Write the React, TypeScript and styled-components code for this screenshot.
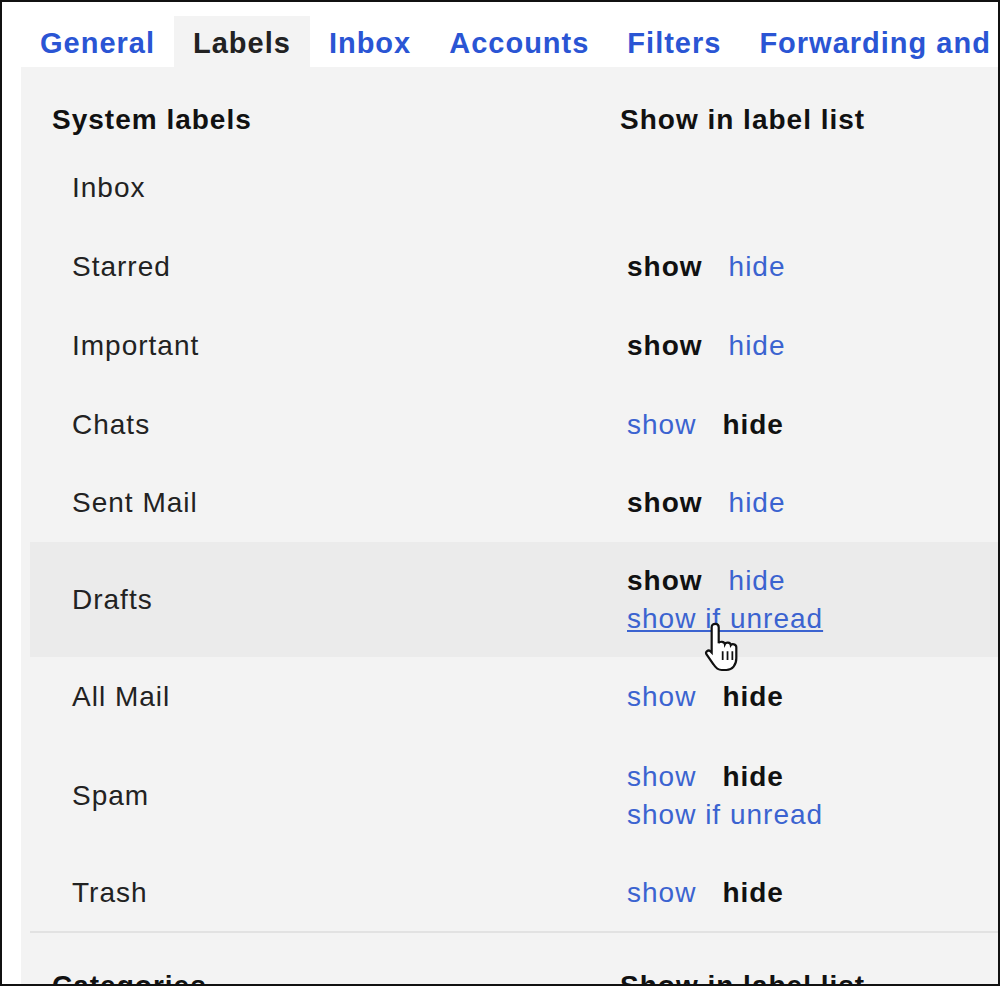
import React from "react";
import styled, { createGlobalStyle } from "styled-components";

const Global = createGlobalStyle`
  html, body { margin: 0; padding: 0; background: #fff; }
  * { box-sizing: border-box; }
`;

const Frame = styled.div`
  width: 1000px; height: 986px; border: 2px solid #111; overflow: hidden;
  background: #fff; font-family: Arial, "Liberation Sans", sans-serif;
  font-size: 28px; letter-spacing: 1px; color: #222;
`;
const Tabs = styled.div`
  display: flex; padding: 14px 0 0 19px; height: 65px;
`;
const Tab = styled.div<{ $active?: boolean }>`
  padding: 11px 19px 0; height: 51px; font-weight: bold; font-size: 29px;
  color: ${p => (p.$active ? "#222" : "#2a55d4")};
  background: ${p => (p.$active ? "#f3f3f3" : "transparent")};
  white-space: nowrap;
`;
const Panel = styled.div`
  margin-left: 19px; background: #f3f3f3; height: 1000px;
`;
const Header = styled.div`
  display: grid; grid-template-columns: 568px 1fr; height: 81px;
  padding: 37px 0 0 31px; font-weight: bold; color: #111;
  white-space: nowrap;
`;
const Row = styled.div<{ $h: number; $hl?: boolean }>`
  display: grid; grid-template-columns: 597px 1fr; align-items: center;
  height: ${p => p.$h}px; margin-left: 9px;
  background: ${p => (p.$hl ? "#ebebeb" : "transparent")};
  position: relative;
`;
const Name = styled.div`padding-left: 42px; color: #222;`;
const Opts = styled.div`line-height: 38px;`;
const Line = styled.div`display: flex; gap: 26px;`;
const Opt = styled.span<{ $on?: boolean; $u?: boolean }>`
  font-weight: ${p => (p.$on ? "bold" : "normal")};
  color: ${p => (p.$on ? "#111" : "#3b63d0")};
  text-decoration: ${p => (p.$u ? "underline" : "none")};
`;
const Sep = styled.div`height: 2px; background: #e2e2e2; margin: 0 0 0 9px;`;
const Cursor = styled.svg`position: absolute; left: 672px; top: 78px;`;

type R = { name: string; show?: boolean; unread?: boolean; h: number; hl?: boolean };
const rows: R[] = [
  { name: "Inbox", h: 79 },
  { name: "Starred", show: true, h: 79 },
  { name: "Important", show: true, h: 79 },
  { name: "Chats", show: false, h: 79 },
  { name: "Sent Mail", show: true, h: 78 },
  { name: "Drafts", show: true, unread: true, h: 115, hl: true },
  { name: "All Mail", show: false, h: 80 },
  { name: "Spam", show: false, unread: true, h: 117 },
  { name: "Trash", show: false, h: 77 },
];

export default function App() {
  return (
    <Frame>
      <Global />
      <Tabs>
        <Tab>General</Tab>
        <Tab $active>Labels</Tab>
        <Tab>Inbox</Tab>
        <Tab>Accounts</Tab>
        <Tab>Filters</Tab>
        <Tab>Forwarding and POP/IMAP</Tab>
      </Tabs>
      <Panel>
        <Header><div>System labels</div><div>Show in label list</div></Header>
        {rows.map(r => (
          <Row key={r.name} $h={r.h} $hl={r.hl}>
            <Name>{r.name}</Name>
            <Opts>
              {r.show !== undefined && (
                <Line>
                  <Opt $on={r.show}>show</Opt>
                  <Opt $on={!r.show}>hide</Opt>
                </Line>
              )}
              {r.unread && <Line><Opt $u={r.hl}>show if unread</Opt></Line>}
            </Opts>
            {r.hl && (
              <Cursor width="44" height="56" viewBox="0 0 20 25">
                <path d="M6 1.5c1 0 1.6.7 1.6 1.6v7.2c.3-.9 2.6-.9 2.8.4.4-.9 2.5-.9 2.7.5.5-.7 2.5-.6 2.5 1v5c0 3-1.8 5.3-4.5 5.3H9c-1.8 0-2.8-1-3.8-2.6L2 15.3c-.6-1.1.8-2.2 1.8-1.3l.6.6V3.1c0-.9.6-1.6 1.6-1.6z" fill="#fff" stroke="#111" strokeWidth="1" />
                <path d="M9.4 14v4M11.6 14v4M13.8 14v4" stroke="#111" strokeWidth="0.8" />
              </Cursor>
            )}
          </Row>
        ))}
        <Sep />
        <Header><div>Categories</div><div>Show in label list</div></Header>
      </Panel>
    </Frame>
  );
}
